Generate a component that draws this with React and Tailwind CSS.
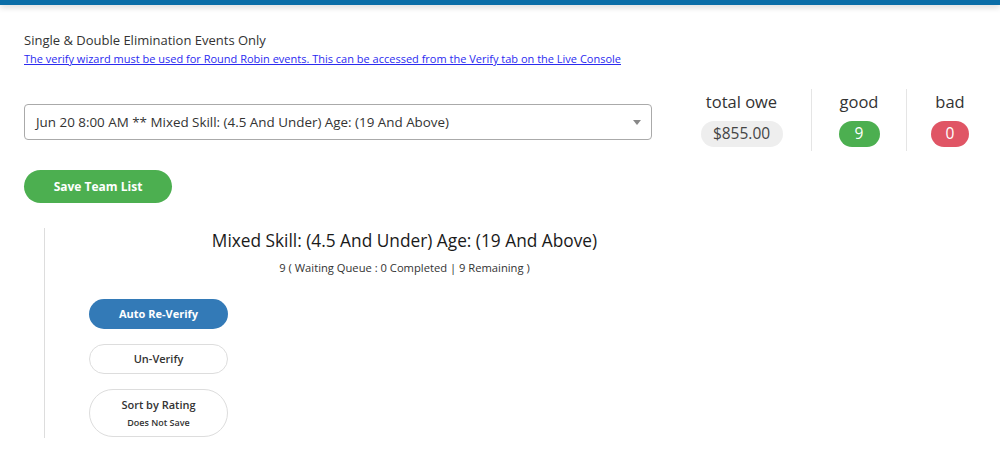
import React from "react";

export default function App() {
  return (
    <div className="w-[1000px] h-[451px] bg-white overflow-hidden text-[#333]" style={{ fontFamily: '"Open Sans", "Noto Sans", sans-serif' }}>
      <div className="h-[5px] bg-[#0b6ea8] shadow-[0_2px_6px_rgba(0,0,0,0.18)]" />
      <div className="pl-[24px] pt-[27px]">
        <div className="text-[13px] leading-[16px] text-[#333]">Single &amp; Double Elimination Events Only</div>
        <a href="#" className="block mt-[4px] text-[11px] leading-[14px] text-[#2b2bf0] underline">
          The verify wizard must be used for Round Robin events. This can be accessed from the Verify tab on the Live Console
        </a>
        <div className="flex items-start mt-[23px]">
          <div className="mt-[15px] w-[628px] h-[36px] border border-[#aaa] rounded-[4px] flex items-center justify-between pl-[11px] pr-[10px]">
            <span className="text-[13.4px]">Jun 20 8:00 AM ** Mixed Skill: (4.5 And Under) Age: (19 And Above)</span>
            <svg width="8" height="5" viewBox="0 0 8 5"><path d="M0 0h8L4 5z" fill="#888" /></svg>
          </div>
          <div className="ml-[20px] flex">
            <div className="w-[140px] flex flex-col items-center border-r border-[#e5e5e5] h-[62px] pt-[2px]">
              <div className="text-[16.5px] leading-[22px]">total owe</div>
              <div className="mt-[8px] w-[82px] h-[26px] rounded-full bg-[#eee] flex items-center justify-center text-[15.5px] text-[#444]">$855.00</div>
            </div>
            <div className="w-[95px] flex flex-col items-center border-r border-[#e5e5e5] h-[62px] pt-[2px]">
              <div className="text-[16.5px] leading-[22px]">good</div>
              <div className="mt-[8px] w-[41px] h-[26px] rounded-full bg-[#4caf50] flex items-center justify-center text-[15.5px] text-white">9</div>
            </div>
            <div className="w-[86px] flex flex-col items-center h-[62px] pt-[2px]">
              <div className="text-[16.5px] leading-[22px]">bad</div>
              <div className="mt-[8px] w-[38px] h-[26px] rounded-full bg-[#e05565] flex items-center justify-center text-[15.5px] text-white">0</div>
            </div>
          </div>
        </div>
        <button className="mt-[19px] w-[148px] h-[33px] rounded-full bg-[#4caf50] text-white text-[12px] font-bold">Save Team List</button>
        <div className="ml-[20px] mt-[25px] w-[720px] border-l border-[#ddd] pb-[1px]">
          <div className="text-center text-[17.3px] leading-[22px] pt-[2px] text-[#1a1a1a]">Mixed Skill: (4.5 And Under) Age: (19 And Above)</div>
          <div className="text-center text-[11.2px] leading-[14px] mt-[9px] font-medium">9 ( Waiting Queue : 0 Completed | 9 Remaining )</div>
          <div className="ml-[44px] mt-[24px] flex flex-col gap-[15px] w-[139px]">
            <button className="h-[30px] rounded-full bg-[#337ab7] text-white text-[11px] font-bold">Auto Re-Verify</button>
            <button className="h-[30px] rounded-full border border-[#ddd] bg-white text-[11px] font-semibold">Un-Verify</button>
            <button className="h-[48px] rounded-full border border-[#ddd] bg-white flex flex-col items-center justify-center">
              <span className="text-[11px] font-semibold leading-[15px]">Sort by Rating</span>
              <span className="text-[9px] font-semibold leading-[12px] mt-[5px]">Does Not Save</span>
            </button>
          </div>
        </div>
      </div>
    </div>
  );
}
